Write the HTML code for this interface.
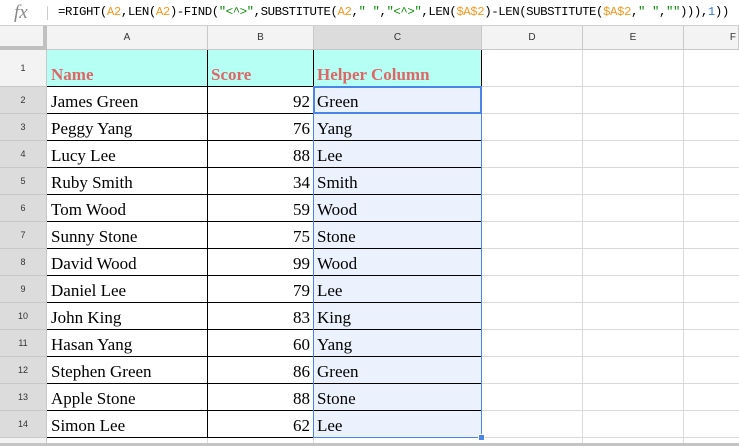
<!DOCTYPE html>
<html><head><style>
*{margin:0;padding:0;box-sizing:border-box}
body{width:739px;height:446px;overflow:hidden;background:#fff;position:relative;font-family:"Liberation Sans",sans-serif}
.a{position:absolute}
.fb{left:0;top:0;width:739px;height:26px;background:#fff;border-bottom:1px solid #d0d0d0}
.fx{left:14px;top:2px;font-family:"Liberation Serif",serif;font-style:italic;font-size:19px;color:#888}
.sep{left:47px;top:6px;width:1px;height:14px;background:#ccc}
.f{left:58px;top:5px;font-family:"Liberation Mono",monospace;font-size:12.4px;color:#000;white-space:pre;letter-spacing:-0.45px}
.o{color:#f7981d}.g{color:#0a8f08}.b{color:#3b78e7}
.ch{top:26px;height:24px;background:#f3f3f3;border-right:1px solid #c8c8c8;border-bottom:1px solid #c8c8c8;font-size:10px;color:#333;text-align:center;line-height:24px}
.rh{left:0;width:47px;background:#dcdcdc;border-bottom:1px solid #c8c8c8;border-right:1px solid #c8c8c8;font-size:9px;color:#333;text-align:center}
.c{font-family:"Liberation Serif",serif;font-size:17px;color:#000;white-space:nowrap;padding-left:4px}
.h{font-weight:bold;color:#e06666}
.gl{background:#d9d9d9}
</style></head><body>
<div class="a fb"></div>
<div class="a fx">fx</div>
<div class="a sep"></div>
<div class="a f">=RIGHT(<span class="o">A2</span>,LEN(<span class="o">A2</span>)-FIND(<span class="g">"&lt;^&gt;"</span>,SUBSTITUTE(<span class="o">A2</span>,<span class="g">" "</span>,<span class="g">"&lt;^&gt;"</span>,LEN(<span class="o">$A$2</span>)-LEN(SUBSTITUTE(<span class="o">$A$2</span>,<span class="g">" "</span>,<span class="g">""</span>))),<span class="b">1</span>))</div>

<!-- grid lines for D-F -->
<div class="a gl" style="left:481px;top:86px;width:258px;height:1px"></div>
<div class="a" style="left:481px;top:87px;width:258px;height:351px;background:repeating-linear-gradient(to bottom,transparent 0,transparent 26px,#d9d9d9 26px,#d9d9d9 27px)"></div>
<div class="a gl" style="left:582px;top:50px;width:1px;height:393px"></div>
<div class="a gl" style="left:683px;top:50px;width:1px;height:393px"></div>
<div class="a gl" style="left:47px;top:437px;width:692px;height:1px"></div>
<div class="a gl" style="left:207px;top:437px;width:1px;height:6px"></div>
<div class="a gl" style="left:313px;top:437px;width:1px;height:6px"></div>
<div class="a" style="left:0;top:443px;width:739px;height:3px;background:#c4c4c4"></div>

<!-- column headers -->
<div class="a ch" style="left:0;width:47px;border-right:4px solid #c0c0c0;border-bottom:4px solid #c0c0c0"></div>
<div class="a ch" style="left:47px;width:161px">A</div>
<div class="a ch" style="left:208px;width:106px">B</div>
<div class="a ch" style="left:314px;width:168px;background:#dcdcdc">C</div>
<div class="a ch" style="left:482px;width:101px">D</div>
<div class="a ch" style="left:583px;width:101px">E</div>
<div class="a ch" style="left:684px;width:55px;text-align:right;padding-right:2px">F</div>

<!-- row 1 -->
<div class="a rh" style="top:50px;height:37px;line-height:36px;background:#f3f3f3">1</div>
<div class="a" style="left:47px;top:50px;width:434px;height:37px;background:#b5fff4"></div>
<div class="a c h" style="left:47px;top:65px">Name</div>
<div class="a c h" style="left:207px;top:65px">Score</div>
<div class="a c h" style="left:313px;top:65px">Helper Column</div>
<div class="a" style="left:314px;top:87px;width:167px;height:351px;background:#ebf2fd"></div>

<div class="a rh" style="top:87px;height:27px;line-height:26px">2</div>
<div class="a rh" style="top:114px;height:27px;line-height:26px">3</div>
<div class="a rh" style="top:141px;height:27px;line-height:26px">4</div>
<div class="a rh" style="top:168px;height:27px;line-height:26px">5</div>
<div class="a rh" style="top:195px;height:27px;line-height:26px">6</div>
<div class="a rh" style="top:222px;height:27px;line-height:26px">7</div>
<div class="a rh" style="top:249px;height:27px;line-height:26px">8</div>
<div class="a rh" style="top:276px;height:27px;line-height:26px">9</div>
<div class="a rh" style="top:303px;height:27px;line-height:26px">10</div>
<div class="a rh" style="top:330px;height:27px;line-height:26px">11</div>
<div class="a rh" style="top:357px;height:27px;line-height:26px">12</div>
<div class="a rh" style="top:384px;height:27px;line-height:26px">13</div>
<div class="a rh" style="top:411px;height:27px;line-height:26px">14</div>
<div class="a rh" style="top:438px;height:5px;background:#f3f3f3;border-bottom:none"></div>

<!-- black borders -->
<div class="a" style="left:47px;top:86px;width:434px;height:1px;background:#000"></div>
<div class="a" style="left:47px;top:113px;width:434px;height:325px;background:repeating-linear-gradient(to bottom,#000 0,#000 1px,transparent 1px,transparent 27px)"></div>
<div class="a" style="left:207px;top:50px;width:1px;height:388px;background:#000"></div>
<div class="a" style="left:313px;top:50px;width:1px;height:388px;background:#000"></div>
<div class="a" style="left:481px;top:50px;width:1px;height:37px;background:#000"></div>
<div class="a" style="left:313px;top:87px;width:1px;height:350px;background:#4a86e8"></div>
<div class="a" style="left:481px;top:87px;width:1px;height:350px;background:#4a86e8"></div>
<div class="a" style="left:313px;top:437px;width:169px;height:1px;background:#4a86e8"></div>
<div class="a" style="left:313px;top:86px;width:169px;height:28px;border:2px solid #4a86e8"></div>
<div class="a" style="left:478px;top:434px;width:7px;height:7px;background:#4a86e8;border:1px solid #fff"></div>

<div class="a c" style="left:47px;top:92px">James Green</div><div class="a c" style="left:207px;top:92px;width:103px;text-align:right">92</div><div class="a c" style="left:313px;top:92px">Green</div>
<div class="a c" style="left:47px;top:119px">Peggy Yang</div><div class="a c" style="left:207px;top:119px;width:103px;text-align:right">76</div><div class="a c" style="left:313px;top:119px">Yang</div>
<div class="a c" style="left:47px;top:146px">Lucy Lee</div><div class="a c" style="left:207px;top:146px;width:103px;text-align:right">88</div><div class="a c" style="left:313px;top:146px">Lee</div>
<div class="a c" style="left:47px;top:173px">Ruby Smith</div><div class="a c" style="left:207px;top:173px;width:103px;text-align:right">34</div><div class="a c" style="left:313px;top:173px">Smith</div>
<div class="a c" style="left:47px;top:200px">Tom Wood</div><div class="a c" style="left:207px;top:200px;width:103px;text-align:right">59</div><div class="a c" style="left:313px;top:200px">Wood</div>
<div class="a c" style="left:47px;top:227px">Sunny Stone</div><div class="a c" style="left:207px;top:227px;width:103px;text-align:right">75</div><div class="a c" style="left:313px;top:227px">Stone</div>
<div class="a c" style="left:47px;top:254px">David Wood</div><div class="a c" style="left:207px;top:254px;width:103px;text-align:right">99</div><div class="a c" style="left:313px;top:254px">Wood</div>
<div class="a c" style="left:47px;top:281px">Daniel Lee</div><div class="a c" style="left:207px;top:281px;width:103px;text-align:right">79</div><div class="a c" style="left:313px;top:281px">Lee</div>
<div class="a c" style="left:47px;top:308px">John King</div><div class="a c" style="left:207px;top:308px;width:103px;text-align:right">83</div><div class="a c" style="left:313px;top:308px">King</div>
<div class="a c" style="left:47px;top:335px">Hasan Yang</div><div class="a c" style="left:207px;top:335px;width:103px;text-align:right">60</div><div class="a c" style="left:313px;top:335px">Yang</div>
<div class="a c" style="left:47px;top:362px">Stephen Green</div><div class="a c" style="left:207px;top:362px;width:103px;text-align:right">86</div><div class="a c" style="left:313px;top:362px">Green</div>
<div class="a c" style="left:47px;top:389px">Apple Stone</div><div class="a c" style="left:207px;top:389px;width:103px;text-align:right">88</div><div class="a c" style="left:313px;top:389px">Stone</div>
<div class="a c" style="left:47px;top:416px">Simon Lee</div><div class="a c" style="left:207px;top:416px;width:103px;text-align:right">62</div><div class="a c" style="left:313px;top:416px">Lee</div>
</body></html>
